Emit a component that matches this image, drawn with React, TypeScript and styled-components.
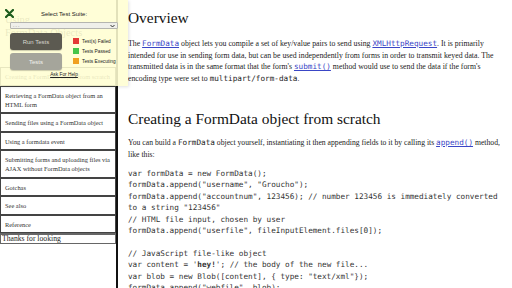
import React from "react";
import styled, { createGlobalStyle } from "styled-components";

const GlobalStyle = createGlobalStyle`
  html, body {
    margin: 0;
    padding: 0;
    background: #fff;
  }
  body {
    font-family: "Liberation Serif", "Times New Roman", serif;
    color: #222;
    overflow: hidden;
  }
`;

const Page = styled.div`
  display: flex;
  width: 512px;
  height: 288px;
  position: relative;
  overflow: hidden;
`;

const Sidebar = styled.aside`
  flex: 0 0 116px;
  border-right: 2px solid #111;
  display: flex;
  flex-direction: column;
`;

const SideTitle = styled.div`
  height: 67px;
  box-sizing: border-box;
  padding: 13px 5px 0;
  font-size: 10.5px;
  line-height: 13px;
  color: #555;
`;

const SideItem = styled.div`
  border: 1px solid #444;
  padding: 4px 4px 3.5px;
  font-size: 6.4px;
  line-height: 9px;
  color: #333;
`;

const Thanks = styled.div`
  border: 1px solid #666;
  border-top-width: 2px;
  padding: 0 1px;
  font-size: 7.68px;
  line-height: 8px;
  color: #222;
`;

const Main = styled.main`
  flex: 1;
  padding: 8px 4px 0 10px;
  min-width: 0;
`;

const Heading = styled.h2<{ $top: number }>`
  margin: ${(p) => p.$top}px 0 0;
  font-size: 15.4px;
  line-height: 19px;
  font-weight: normal;
  color: #111;
`;

const Para = styled.p<{ $top: number; $size: number }>`
  margin: ${(p) => p.$top}px 0 0;
  font-size: ${(p) => p.$size}px;
  line-height: 11.5px;
  color: #222;
`;

const Code = styled.code`
  font-family: "DejaVu Sans Mono", monospace;
  font-size: 7.68px;
  color: #222;
`;

const CodeLink = styled.a`
  font-family: "DejaVu Sans Mono", monospace;
  font-size: 7.68px;
  color: #3a46c6;
  text-decoration: underline;
`;

const Pre = styled.pre`
  margin: 8px 0 0;
  font-family: "DejaVu Sans Mono", monospace;
  font-size: 7.68px;
  line-height: 11.4px;
  color: #333;
  white-space: pre;
`;

/* test runner overlay */
const Panel = styled.div`
  position: absolute;
  top: 0;
  left: 0;
  width: 128px;
  height: 86px;
  box-sizing: border-box;
  padding: 11px 10px 0;
  background: rgba(255, 254, 210, 0.88);
  box-shadow: 1px 1px 3px rgba(0, 0, 0, 0.12);
  font-family: "Liberation Sans", Arial, sans-serif;
  display: flex;
  flex-direction: column;
`;

const Close = styled.div`
  position: absolute;
  top: 4px;
  left: 5px;
  width: 9px;
  height: 9px;
`;

const PanelTitle = styled.div`
  text-align: center;
  font-size: 6px;
  line-height: 7px;
  color: #222;
`;

const SelectBox = styled.div`
  margin-top: 4px;
  height: 7px;
  box-sizing: border-box;
  border: 1px solid #b5b5b0;
  border-radius: 1px;
  background: #efefea;
  display: flex;
  align-items: center;
  justify-content: space-between;
  padding: 0 2px;
  font-size: 4px;
  line-height: 5px;
  color: #555;
`;

const Controls = styled.div`
  margin-top: 4px;
  display: flex;
  gap: 11px;
`;

const Buttons = styled.div`
  display: flex;
  flex-direction: column;
  gap: 3px;
`;

const Button = styled.div<{ $dim?: boolean }>`
  width: 52px;
  height: 17px;
  border-radius: 3px;
  background: ${(p) => (p.$dim ? "#a5a59b" : "#5c5a51")};
  color: ${(p) => (p.$dim ? "#f2f2ec" : "#d8d8d0")};
  font-size: 6px;
  display: flex;
  align-items: center;
  justify-content: center;
  box-shadow: 0 1px 1px rgba(0, 0, 0, 0.2);
`;

const Legend = styled.div`
  padding-top: 5px;
  display: flex;
  flex-direction: column;
  gap: 4px;
`;

const LegendRow = styled.div`
  display: flex;
  align-items: center;
  gap: 3px;
  height: 6px;
  font-size: 4.8px;
  color: #222;
`;

const Swatch = styled.span<{ $color: string }>`
  width: 6px;
  height: 6px;
  background: ${(p) => p.$color};
`;

const Help = styled.a`
  margin-top: 2px;
  align-self: center;
  font-size: 4.8px;
  line-height: 6px;
  color: #222;
  text-decoration: underline;
`;

const sideItems = [
  "Creating a FormData object from scratch",
  "Retrieving a FormData object from an HTML form",
  "Sending files using a FormData object",
  "Using a formdata event",
  "Submitting forms and uploading files via AJAX without FormData objects",
  "Gotchas",
  "See also",
  "Reference",
];

const App = () => {
  return (
    <Page>
      <GlobalStyle />
      <Sidebar>
        <SideTitle>
          Using
          <br />
          FormData Objects
        </SideTitle>
        {sideItems.map((s) => (
          <SideItem key={s}>{s}</SideItem>
        ))}
        <Thanks>Thanks for looking</Thanks>
      </Sidebar>
      <Main>
        <Heading $top={0}>Overview</Heading>
        <Para $top={11} $size={7.8}>
          The <CodeLink>FormData</CodeLink> object lets you compile a set of
          key/value pairs to send using <CodeLink>XMLHttpRequest</CodeLink>. It
          is primarily intended for use in sending form data, but can be used
          independently from forms in order to transmit keyed data. The
          transmitted data is in the same format that the form's{" "}
          <CodeLink>submit()</CodeLink> method would use to send the data if the
          form's encoding type were set to <Code>multipart/form-data</Code>.
        </Para>
        <Heading $top={25}>Creating a FormData object from scratch</Heading>
        <Para $top={9} $size={7.68}>
          You can build a <Code>FormData</Code> object yourself, instantiating
          it then appending fields to it by calling its{" "}
          <CodeLink>append()</CodeLink> method, like this:
        </Para>
        <Pre>
          {`var formData = new FormData();
formData.append("username", "Groucho");
formData.append("accountnum", 123456); // number 123456 is immediately converted
to a string "123456"
// HTML file input, chosen by user
formData.append("userfile", fileInputElement.files[0]);

// JavaScript file-like object
var content = '`}
          <b>hey!</b>
          {`'; // the body of the new file...
var blob = new Blob([content], { type: "text/xml"});
formData.append("webfile", blob);`}
        </Pre>
      </Main>

      <Panel>
        <Close>
          <svg width="9" height="9" viewBox="0 0 9 9">
            <path
              d="M1 1 L8 8 M8 1 L1 8"
              stroke="#1d5c1d"
              strokeWidth="2.2"
              strokeLinecap="round"
            />
          </svg>
        </Close>
        <PanelTitle>Select Test Suite:</PanelTitle>
        <SelectBox>
          <span>- - -</span>
          <svg width="5" height="4" viewBox="0 0 5 4">
            <path d="M0.5 1 L2.5 3 L4.5 1" stroke="#222" strokeWidth="0.9" fill="none" />
          </svg>
        </SelectBox>
        <Controls>
          <Buttons>
            <Button>Run Tests</Button>
            <Button $dim>Tests</Button>
          </Buttons>
          <Legend>
            <LegendRow>
              <Swatch $color="#e43b36" />
              Test(s) Failed
            </LegendRow>
            <LegendRow>
              <Swatch $color="#45c64a" />
              Tests Passed
            </LegendRow>
            <LegendRow>
              <Swatch $color="#f0a020" />
              Tests Executing
            </LegendRow>
          </Legend>
        </Controls>
        <Help>Ask For Help</Help>
      </Panel>
    </Page>
  );
};

export default App;
